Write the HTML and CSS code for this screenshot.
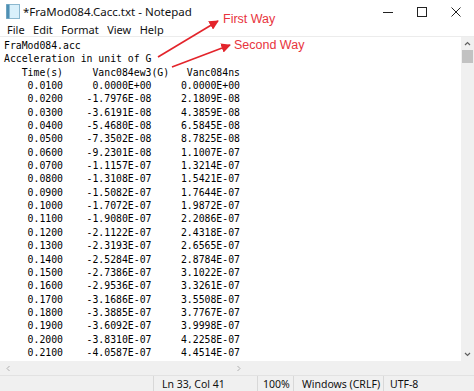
FILE: index.html
```html
<!DOCTYPE html>
<html lang="en">
<head>
    <meta charset="UTF-8">
    <meta name="viewport" content="width=device-width, initial-scale=1.0">
    <title>*FraMod084.Cacc.txt - Notepad</title>
    <link rel="stylesheet" href="styles.css">
</head>
<body>
    <div class="window">
        <header class="titlebar">
            <svg class="app-icon" viewBox="0 0 14 15" width="14" height="15">
                <rect x="0.5" y="0.5" width="13" height="14" fill="#bfe3f5" stroke="#8cb8cf"/>
                <rect x="0.5" y="0.5" width="3" height="14" fill="#4f8fb3"/>
                <rect x="4" y="1" width="9" height="13" fill="#d9f0fb"/>
            </svg>
            <span class="title">*FraMod084.Cacc.txt - Notepad</span>
            <div class="controls">
                <span class="ctrl">
                    <svg viewBox="0 0 12 12" width="12" height="12"><line x1="1" y1="6.5" x2="11" y2="6.5" stroke="#222" stroke-width="1"/></svg>
                </span>
                <span class="ctrl">
                    <svg viewBox="0 0 12 12" width="12" height="12"><rect x="1.5" y="1.5" width="9" height="9" fill="none" stroke="#222" stroke-width="1"/></svg>
                </span>
                <span class="ctrl">
                    <svg viewBox="0 0 12 12" width="12" height="12"><path d="M1.5 1.5 L10.5 10.5 M10.5 1.5 L1.5 10.5" stroke="#222" stroke-width="1"/></svg>
                </span>
            </div>
        </header>

        <nav class="menubar">
            <span>File</span>
            <span>Edit</span>
            <span>Format</span>
            <span>View</span>
            <span>Help</span>
        </nav>

        <div class="editor">
            <pre class="text">FraMod084.acc
Acceleration in unit of G
   Time(s)     Vanc084ew3(G)   Vanc084ns
    0.0100     0.0000E+00     0.0000E+00
    0.0200    -1.7976E-08     2.1809E-08
    0.0300    -3.6191E-08     4.3859E-08
    0.0400    -5.4680E-08     6.5845E-08
    0.0500    -7.3502E-08     8.7825E-08
    0.0600    -9.2301E-08     1.1007E-07
    0.0700    -1.1157E-07     1.3214E-07
    0.0800    -1.3108E-07     1.5421E-07
    0.0900    -1.5082E-07     1.7644E-07
    0.1000    -1.7072E-07     1.9872E-07
    0.1100    -1.9080E-07     2.2086E-07
    0.1200    -2.1122E-07     2.4318E-07
    0.1300    -2.3193E-07     2.6565E-07
    0.1400    -2.5284E-07     2.8784E-07
    0.1500    -2.7386E-07     3.1022E-07
    0.1600    -2.9536E-07     3.3261E-07
    0.1700    -3.1686E-07     3.5508E-07
    0.1800    -3.3885E-07     3.7767E-07
    0.1900    -3.6092E-07     3.9998E-07
    0.2000    -3.8310E-07     4.2258E-07
    0.2100    -4.0587E-07     4.4514E-07</pre>
            <div class="vscroll">
                <svg class="arrow-btn" viewBox="0 0 13 13" width="13" height="13"><path d="M4 8 L6.5 5.5 L9 8" fill="none" stroke="#606060" stroke-width="1.2"/></svg>
                <div class="thumb"></div>
                <div class="track"></div>
                <svg class="arrow-btn" viewBox="0 0 13 13" width="13" height="13"><path d="M4 5 L6.5 7.5 L9 5" fill="none" stroke="#606060" stroke-width="1.2"/></svg>
            </div>
        </div>

        <div class="hscroll">
            <svg viewBox="0 0 13 13" width="13" height="13"><path d="M7.5 4 L5 6.5 L7.5 9" fill="none" stroke="#b0b0b0" stroke-width="1"/></svg>
            <svg viewBox="0 0 13 13" width="13" height="13"><path d="M5.5 4 L8 6.5 L5.5 9" fill="none" stroke="#b0b0b0" stroke-width="1"/></svg>
            <div class="corner"></div>
        </div>

        <footer class="statusbar">
            <div class="spacer"></div>
            <div class="cell cell-pos">Ln 33, Col 41</div>
            <div class="cell cell-zoom">100%</div>
            <div class="cell cell-eol">Windows (CRLF)</div>
            <div class="cell cell-enc">UTF-8</div>
        </footer>

        <!-- annotations drawn over the screenshot -->
        <div class="notes">
            <span class="note note-first">First Way</span>
            <span class="note note-second">Second Way</span>
            <svg class="note-arrows" viewBox="0 0 474 391" width="474" height="391">
                <defs>
                    <marker id="head" viewBox="0 0 10 10" refX="9" refY="5" markerWidth="6" markerHeight="6" orient="auto">
                        <path d="M0 0 L10 5 L0 10 Z" fill="#e3242b"/>
                    </marker>
                </defs>
                <line x1="158" y1="57" x2="218" y2="21" stroke="#e3242b" stroke-width="1.6" marker-end="url(#head)"/>
                <line x1="172" y1="67" x2="230" y2="45" stroke="#e3242b" stroke-width="1.6" marker-end="url(#head)"/>
            </svg>
        </div>
    </div>
</body>
</html>
```

FILE: styles.css
```css
body {
    margin: 0;
    padding: 0;
    background-color: #ffffff;
    font-family: 'Noto Sans', 'Open Sans', sans-serif;
    color: #000;
}

.window {
    position: relative;
    width: 474px;
    height: 391px;
    overflow: hidden;
    display: flex;
    flex-direction: column;
    background-color: #fff;
}

.titlebar {
    height: 23px;
    display: flex;
    align-items: center;
    background-color: #fff;
}

.app-icon {
    margin-left: 6px;
    margin-right: 3px;
}

.title {
    font-size: 11.5px;
    color: #111;
}

.controls {
    margin-left: auto;
    display: flex;
    padding-right: 1px;
}

.ctrl {
    width: 34px;
    height: 23px;
    display: flex;
    align-items: center;
    justify-content: center;
}

.menubar {
    height: 13px;
    display: flex;
    align-items: center;
    gap: 8.5px;
    padding-left: 7px;
    font-size: 11px;
    color: #111;
}

.editor {
    flex: 1;
    display: flex;
    min-height: 0;
    border-top: 1px solid #ececec;
}

.text {
    flex: 1;
    margin: 0;
    padding: 2px 0 0 4px;
    font-family: 'DejaVu Sans Mono', 'Liberation Mono', monospace;
    font-size: 9.8px;
    line-height: 13.35px;
    color: #000;
    overflow: hidden;
}

.vscroll {
    width: 13px;
    display: flex;
    flex-direction: column;
    background-color: #f0f0f0;
}

.thumb {
    height: 13px;
    margin: 0 1px;
    background-color: #c2c2c2;
}

.track {
    flex: 1;
}

.hscroll {
    height: 14px;
    display: flex;
    align-items: center;
    justify-content: space-between;
    padding-left: 2px;
    background-color: #f0f0f0;
}

.corner {
    width: 13px;
    height: 14px;
    background-color: #f0f0f0;
}

.statusbar {
    height: 15px;
    display: flex;
    align-items: center;
    background-color: #f0f0f0;
    border-top: 1px solid #e2e2e2;
    font-size: 10.5px;
    color: #111;
}

.spacer {
    width: 153px;
}

.cell {
    height: 100%;
    display: flex;
    align-items: center;
    border-left: 1px solid #d8d8d8;
    box-sizing: border-box;
}

.cell-pos {
    width: 104px;
    padding-left: 8px;
}

.cell-zoom {
    width: 36px;
    padding-left: 5px;
}

.cell-eol {
    width: 90px;
    padding-left: 8px;
}

.cell-enc {
    flex: 1;
    padding-left: 6px;
}

.notes {
    position: absolute;
    inset: 0;
    pointer-events: none;
}

.note {
    position: absolute;
    font-family: 'Liberation Sans', Arial, sans-serif;
    font-size: 12.5px;
    color: #e8343d;
    line-height: 1;
}

.note-first {
    left: 223px;
    top: 13px;
}

.note-second {
    left: 234px;
    top: 39px;
}

.note-arrows {
    position: absolute;
    left: 0;
    top: 0;
}
```
